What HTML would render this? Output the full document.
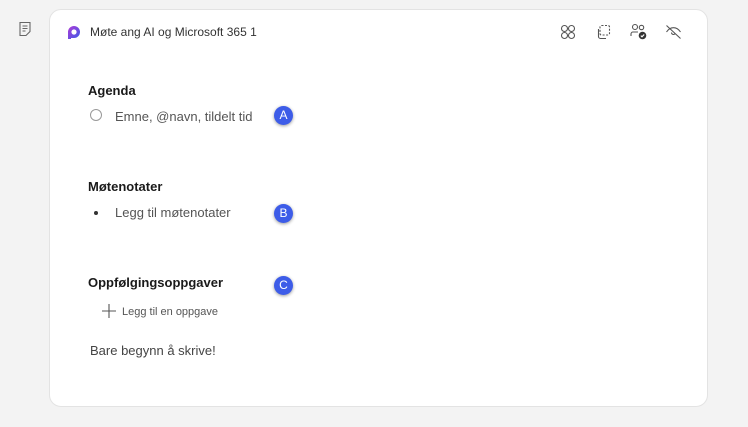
<!DOCTYPE html>
<html><head><meta charset="utf-8"><style>
body{margin:0;width:748px;height:427px;background:#f3f3f3;font-family:"Liberation Sans",sans-serif;position:relative;overflow:hidden;color:#242424}
.card{position:absolute;left:49px;top:9px;width:657px;height:396px;background:#fff;border:1px solid #e3e3e3;border-radius:12px}
.a{position:absolute;white-space:nowrap}
h{font-weight:bold;font-size:13px;color:#1a1a1a}
.t{font-size:13px;color:#555}
.b{position:absolute;width:19px;height:19px;border-radius:50%;background:#3d5ce8;color:#fff;font-size:12px;text-align:center;line-height:19px;box-shadow:0 1px 3px rgba(0,0,0,.4)}
svg{position:absolute}
</style></head><body>
<svg style="left:18px;top:21px" width="14" height="16" viewBox="0 0 14 16" fill="none" stroke="#666" stroke-width="1.1"><path d="M2 1.5h10v9l-4 4H2z"/><path d="M4.5 5h5M4.5 7.5h5M4.5 10h3"/></svg>
<div class="card"></div>
<svg style="left:66px;top:24px" width="16" height="16" viewBox="0 0 16 16"><defs><linearGradient id="g" x1="0" y1="0" x2="1" y2="1"><stop offset="0" stop-color="#b03ad6"/><stop offset="1" stop-color="#3a5ce8"/></linearGradient></defs><path d="M2 15V8a6 6 0 1 1 6 6H5v1z" fill="url(#g)"/><circle cx="8" cy="8" r="2.6" fill="#fff"/></svg>
<div class="a" style="left:90px;top:25px;font-size:12px;color:#333">Møte ang AI og Microsoft 365 1</div>
<svg style="left:560px;top:24px" width="16" height="16" viewBox="0 0 16 16" fill="none" stroke="#555" stroke-width="1.1"><circle cx="4.5" cy="4.5" r="3"/><circle cx="11.5" cy="4.5" r="3"/><circle cx="4.5" cy="11.5" r="3"/><circle cx="11.5" cy="11.5" r="3"/></svg>
<svg style="left:595px;top:24px" width="16" height="16" viewBox="0 0 16 16" fill="none" stroke="#555" stroke-width="1.1"><rect x="5" y="1.5" width="9.5" height="9.5" rx="1.5" stroke-dasharray="2 1.5"/><path d="M3.5 5v7.5a2 2 0 0 0 2 2H11"/></svg>
<svg style="left:630px;top:23px" width="18" height="18" viewBox="0 0 18 18" fill="none" stroke="#555" stroke-width="1.1"><circle cx="5" cy="4" r="2.5"/><circle cx="11.5" cy="4.5" r="2.2"/><path d="M1 13v-2a2 2 0 0 1 2-2h5"/><circle cx="12.5" cy="12.5" r="3.8" fill="#333" stroke="none"/><path d="M10.8 12.6l1.2 1.2 2.2-2.3" stroke="#fff"/></svg>
<svg style="left:665px;top:24px" width="17" height="16" viewBox="0 0 17 16" fill="none" stroke="#555" stroke-width="1.1"><path d="M1.5 1.5l14 13"/><path d="M1.5 8c2-3 4.5-4.3 7-4.3s5 1.3 7 4.3"/><path d="M6.5 8.5a2 2 0 0 0 3.5 1.3"/></svg>
<div class="a" style="left:88px;top:82px"><h>Agenda</h></div>
<div class="a" style="left:90px;top:109px;width:12px;height:12px;border:1px solid #999;border-radius:50%;box-sizing:border-box"></div>
<div class="a t" style="left:115px;top:109px">Emne, @navn, tildelt tid</div>
<div class="b" style="left:274px;top:106px">A</div>
<div class="a" style="left:88px;top:178px"><h>Møtenotater</h></div>
<div class="a" style="left:94px;top:211px;width:4px;height:4px;background:#333;border-radius:50%"></div>
<div class="a t" style="left:115px;top:205px">Legg til møtenotater</div>
<div class="b" style="left:274px;top:204px">B</div>
<div class="a" style="left:88px;top:274px"><h>Oppfølgingsoppgaver</h></div>
<div class="b" style="left:274px;top:276px">C</div>
<svg style="left:102px;top:304px" width="14" height="14" viewBox="0 0 14 14" stroke="#555" stroke-width="1.1"><path d="M7 0v14M0 7h14"/></svg>
<div class="a" style="left:122px;top:306px;font-size:11px;color:#555">Legg til en oppgave</div>
<div class="a t" style="left:90px;top:343px;color:#444">Bare begynn å skrive!</div>
</body></html>
